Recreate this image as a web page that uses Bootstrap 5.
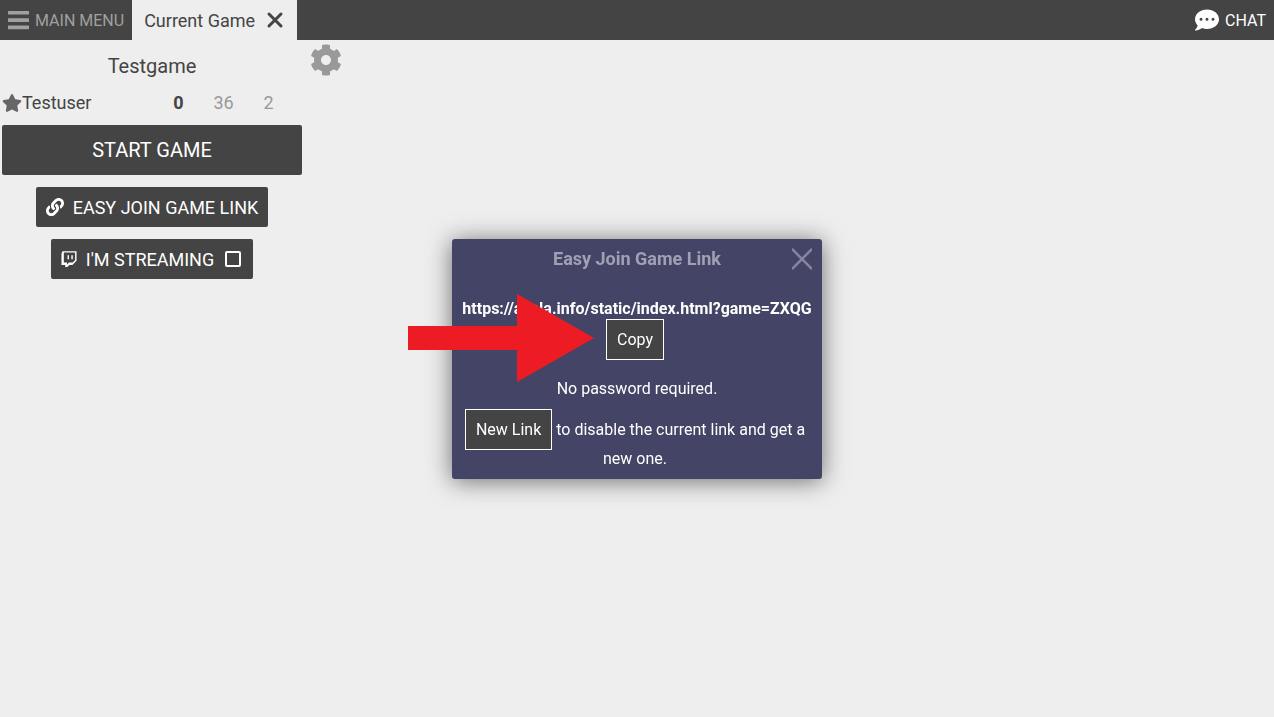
<!DOCTYPE html>
<html lang="en">
<head>
<meta charset="utf-8">
<meta name="viewport" content="width=device-width, initial-scale=1">
<title>Testgame</title>
<link href="https://cdn.jsdelivr.net/npm/bootstrap@5.3.0/dist/css/bootstrap.min.css" rel="stylesheet">
<style>
body { background: #eee; color: #444; font-family: Roboto, sans-serif; font-size: 16px; line-height: 20px; }
svg { fill: currentColor; display: block; flex: none; }
button { font-family: inherit; }
.topbar { background: #444; height: 40px; }
.bar-btn { background: none; border: 0; height: 40px; gap: 6px; padding: 0 8px; color: #a0a0a0; }
.bar-btn.chat { color: #fff; }
.tab { background: #eee; height: 40px; padding: 0 12px; gap: 10px; font-size: 18px; }
.cap { padding-top: 2px; }
.bare { background: none; border: 0; padding: 0; color: inherit; }
.sidebar { width: 304px; padding: 0 2px; }
.game-title { font-size: 20px; line-height: 24px; font-weight: 400; margin: 14px 0 12px; }
.players { font-size: 18px; line-height: 26px; }
.players td, .players th { padding: 0; font-weight: 400; }
.players .num { width: 45px; text-align: center; }
.players .faint { color: #999; }
.players .pad { width: 11px; }
.players .star { color: #666; }
.dark-btn { background: #444; color: #fff; border: 0; border-radius: 2px; height: 40px; padding: 0 10px; font-size: 18px; gap: 9px; }
.dark-btn.start { height: 50px; font-size: 20px; }
.dark-btn.streaming { cursor: pointer; }
.side-stack { gap: 12px; margin-top: 9px; }
.box { appearance: none; width: 16px; height: 16px; border: 2px solid #fff; border-radius: 2px; margin: 0 2px; }
.gear { color: #999; margin: 4px 6px; }
.overlay { padding-top: 1px; }
.dialog-box { width: 370px; background: #446; color: #fff; border-radius: 3px; padding: 0 10px 10px; box-shadow: 0 2px 24px rgba(0,0,0,.55); }
.dialog-head { height: 40px; margin-bottom: 20px; color: #a0a0b4; }
.dialog-head h2 { font-size: 18px; line-height: 20px; font-weight: 700; margin: 0; }
.dialog-close { right: 0; color: #8585a0; }
.line-btn { background: #444; color: #fff; border: 1px solid #fff; padding: 0 10px; height: 41px; margin-bottom: -1px; }
.note { margin: 20px 0 10px; }
.relink { margin-right: 4px; }
.arrow { left: -44px; top: 55px; fill: #ed1c24; pointer-events: none; }
</style>
</head>
<body class="min-vh-100">
<header class="topbar d-flex align-items-center">
  <button type="button" class="bar-btn d-flex align-items-center">
    <svg width="21" height="20" viewBox="0 0 21 20" aria-hidden="true"><rect y="1" width="21" height="3.600" rx=".5"/><rect y="8.300" width="21" height="3.600" rx=".5"/><rect y="15.600" width="21" height="3.600" rx=".5"/></svg>
    <span class="cap">MAIN MENU</span>
  </button>
  <div class="tab d-flex align-items-center">
    <span class="cap">Current Game</span>
    <button type="button" class="bare" aria-label="Close tab">
      <svg width="20" height="20" viewBox="0 0 20 20"><path d="M4 4l12 12M16 4L4 16" stroke="currentColor" stroke-width="3" stroke-linecap="round"/></svg>
    </button>
  </div>
  <button type="button" class="bar-btn chat d-flex align-items-center ms-auto">
    <svg width="24" height="24" viewBox="0 0 512 512" aria-hidden="true"><path d="M256 32C114.6 32 0 125.1 0 240c0 49.600 21.400 95 57 130.700C44.500 421.100 2.700 466 2.200 466.500c-2.200 2.300-2.800 5.700-1.500 8.700S4.800 480 8 480c66.300 0 116-31.800 140.600-51.400 32.700 12.300 69 19.400 107.400 19.400 141.400 0 256-93.100 256-208S397.400 32 256 32zM128 272a32 32 0 1 1 0-64 32 32 0 0 1 0 64zm128 0a32 32 0 1 1 0-64 32 32 0 0 1 0 64zm128 0a32 32 0 1 1 0-64 32 32 0 0 1 0 64z"/></svg>
    <span class="cap">CHAT</span>
  </button>
</header>

<main class="d-flex align-items-start">
  <section class="sidebar">
    <h1 class="game-title text-center">Testgame</h1>
    <table class="players w-100">
      <tbody><tr>
        <th scope="row"><span class="d-flex align-items-center"><svg class="star" width="20" height="18" viewBox="0 0 576 512" aria-hidden="true"><path d="M259.300 17.800L194 150.200 47.900 171.500c-26.200 3.800-36.700 36.100-17.700 54.600l105.700 103-25 145.500c-4.500 26.300 23.200 46 46.400 33.700L288 439.600l130.700 68.700c23.200 12.200 50.900-7.400 46.400-33.700l-25-145.500 105.700-103c19-18.500 8.500-50.800-17.700-54.600L382 150.200 316.700 17.800c-11.700-23.600-45.600-23.900-57.400 0z"/></svg>Testuser</span></th>
        <td class="num fw-bold">0</td>
        <td class="num faint">36</td>
        <td class="num faint">2</td>
        <td class="pad"></td>
      </tr></tbody>
    </table>
    <div class="side-stack d-flex flex-column align-items-center">
      <button type="button" class="dark-btn start w-100">START GAME</button>
      <button type="button" class="dark-btn d-flex align-items-center">
        <svg width="18" height="18" viewBox="0 0 512 512" aria-hidden="true"><path d="M326.612 185.391c59.747 59.809 58.927 155.698.36 214.590-.110.120-.240.250-.360.370l-67.200 67.200c-59.270 59.270-155.699 59.262-214.960 0-59.270-59.260-59.270-155.700 0-214.960l37.106-37.106c9.840-9.840 26.786-3.300 27.294 10.606.648 17.722 3.826 35.527 9.690 52.721 1.986 5.822.567 12.262-3.783 16.612l-13.087 13.087c-28.026 28.026-28.905 73.660-1.155 101.960 28.024 28.579 74.086 28.749 102.325.510l67.200-67.190c28.191-28.191 28.073-73.757 0-101.830-3.701-3.694-7.429-6.564-10.341-8.569a16.037 16.037 0 0 1-6.947-12.606c-.396-10.567 3.348-21.456 11.698-29.806l21.054-21.055c5.521-5.521 14.182-6.199 20.584-1.731a152.482 152.482 0 0 1 20.522 17.197zM467.547 44.449c-59.261-59.262-155.690-59.270-214.960 0l-67.200 67.200c-.120.120-.250.250-.360.370-58.566 58.892-59.387 154.781.360 214.590a152.454 152.454 0 0 0 20.521 17.196c6.402 4.468 15.064 3.789 20.584-1.731l21.054-21.055c8.350-8.350 12.094-19.239 11.698-29.806a16.037 16.037 0 0 0-6.947-12.606c-2.912-2.005-6.640-4.875-10.341-8.569-28.073-28.073-28.191-73.639 0-101.830l67.200-67.190c28.239-28.239 74.300-28.069 102.325.510 27.750 28.300 26.872 73.934-1.155 101.960l-13.087 13.087c-4.350 4.350-5.769 10.790-3.783 16.612 5.864 17.194 9.042 34.999 9.690 52.721.509 13.906 17.454 20.446 27.294 10.606l37.106-37.106c59.271-59.259 59.271-155.699.001-214.959z"/></svg>
        <span class="cap">EASY JOIN GAME LINK</span>
      </button>
      <label class="dark-btn streaming d-flex align-items-center" for="streaming">
        <svg width="16" height="18" viewBox="0 0 448 512" aria-hidden="true"><path d="M40.100 32L10 108.900v314.300h107V480h60.200l56.800-56.800h87l117-117V32H40.100zm357.800 254.100L331 353H224l-56.800 56.800V353H76.900V72.100h321v214zM331 149v116.900h-40.100V149H331zm-107 0v116.900h-40.100V149H224z"/></svg>
        <span class="cap">I'M STREAMING</span>
        <input type="checkbox" class="box" id="streaming">
      </label>
    </div>
  </section>
  <button type="button" class="bare gear" aria-label="Settings">
    <svg width="32" height="32" viewBox="0 0 512 512"><path d="M487.400 315.700l-42.600-24.600c4.300-23.200 4.300-47 0-70.200l42.600-24.600c4.900-2.800 7.100-8.600 5.500-14-11.100-35.600-30-67.800-54.700-94.600-3.800-4.100-10-5.100-14.800-2.300L380.800 110c-17.900-15.400-38.500-27.300-60.800-35.100V25.800c0-5.600-3.900-10.500-9.400-11.700-36.700-8.200-74.300-7.800-109.200 0-5.500 1.200-9.400 6.100-9.400 11.700V75c-22.200 7.900-42.800 19.800-60.800 35.100L88.700 85.500c-4.900-2.800-11-1.900-14.800 2.300-24.700 26.700-43.600 58.900-54.700 94.600-1.700 5.400.6 11.200 5.500 14L67.300 221c-4.300 23.200-4.300 47 0 70.200l-42.600 24.600c-4.900 2.800-7.100 8.600-5.500 14 11.100 35.600 30 67.800 54.700 94.600 3.800 4.100 10 5.100 14.800 2.300l42.600-24.600c17.900 15.400 38.500 27.300 60.800 35.100v49.200c0 5.600 3.900 10.500 9.400 11.700 36.700 8.200 74.300 7.800 109.200 0 5.500-1.200 9.400-6.100 9.400-11.700v-49.200c22.200-7.900 42.800-19.800 60.800-35.100l42.600 24.600c4.900 2.800 11 1.900 14.800-2.300 24.700-26.700 43.600-58.900 54.700-94.600 1.500-5.500-.7-11.300-5.600-14.100zM256 336c-44.100 0-80-35.900-80-80s35.900-80 80-80 80 35.900 80 80-35.900 80-80 80z"/></svg>
  </button>
</main>

<div class="overlay position-fixed top-0 start-0 w-100 h-100 d-flex align-items-center justify-content-center pe-none">
  <div class="dialog-box position-relative text-center pe-auto" role="dialog" aria-labelledby="dlg-title">
    <div class="dialog-head d-flex align-items-center justify-content-center position-relative">
      <h2 id="dlg-title">Easy Join Game Link</h2>
      <button type="button" class="bare dialog-close position-absolute" aria-label="Close">
        <svg width="20" height="22" viewBox="0 0 20 22"><path d="M0 1l20 20M20 1L0 21" stroke="currentColor" stroke-width="2.500"/></svg>
      </button>
    </div>
    <div class="fw-bold text-nowrap">https://azala.info/static/index.html?game=ZXQG</div>
    <button type="button" class="line-btn me-1">Copy</button>
    <p class="note">No password required.</p>
    <div class="relink"><button type="button" class="line-btn">New Link</button> to disable the current link and get a new one.</div>
    <svg class="arrow position-absolute" width="186" height="88" viewBox="0 0 186 88" aria-hidden="true"><path d="M0 32h109V0l77 44-77 44V56H0z"/></svg>
  </div>
</div>
<script src="https://cdn.jsdelivr.net/npm/bootstrap@5.3.0/dist/js/bootstrap.bundle.min.js"></script>
</body>
</html>
